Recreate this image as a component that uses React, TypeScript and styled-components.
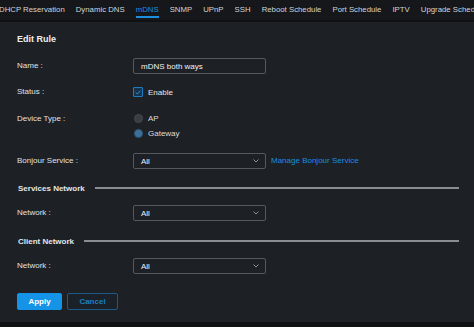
import * as React from 'react';
import styled, { createGlobalStyle } from 'styled-components';

const GlobalStyle = createGlobalStyle`
  html, body {
    margin: 0;
    padding: 0;
    background: #0f1113;
    font-family: "Liberation Sans", Arial, sans-serif;
  }
`;

const Page = styled.div`
  width: 474px;
  height: 327px;
  overflow: hidden;
  background: #0f1113;
  display: flex;
  flex-direction: column;
`;

const TabBar = styled.nav`
  height: 20px;
  background: #15171a;
  display: flex;
  align-items: stretch;
  gap: 11px;
  margin-left: -1px;
  white-space: nowrap;
  overflow: hidden;
  flex-shrink: 0;
`;

const Tab = styled.div<{ $active?: boolean }>`
  position: relative;
  font-size: 7.8px;
  line-height: 19px;
  color: ${p => (p.$active ? '#1b8fe0' : '#d2d5d9')};
  &::after {
    content: '';
    display: ${p => (p.$active ? 'block' : 'none')};
    position: absolute;
    left: 0;
    right: 0;
    bottom: 2px;
    height: 2px;
    background: #1b8fe0;
  }
`;

const Panel = styled.main`
  margin-top: 2px;
  height: 300px;
  background: #1d2024;
  padding: 10px 15px 0 17px;
  box-sizing: border-box;
  display: flex;
  flex-direction: column;
`;

const Title = styled.h2`
  margin: 0;
  font-size: 9px;
  line-height: 14px;
  font-weight: 700;
  color: #eceef0;
`;

const Row = styled.div<{ $space: number }>`
  display: flex;
  align-items: flex-start;
  margin-top: ${p => p.$space}px;
`;

const Label = styled.div`
  width: 116px;
  flex-shrink: 0;
  font-size: 8px;
  line-height: 16px;
  color: #e0e2e5;
`;

const Field = styled.div`
  width: 133px;
  height: 16px;
  box-sizing: border-box;
  border: 1px solid #55595e;
  border-radius: 2px;
  background: #1d2024;
  display: flex;
  align-items: center;
  justify-content: space-between;
  padding: 0 6px 0 7px;
  font-size: 8px;
  color: #f0f2f4;
`;

const Chevron = () => (
  <svg width="6" height="4" viewBox="0 0 6 4">
    <path d="M0.5 0.5 L3 3 L5.5 0.5" stroke="#8c9095" strokeWidth="1" fill="none" />
  </svg>
);

const Check = styled.label`
  display: flex;
  align-items: center;
  gap: 5px;
  height: 16px;
  font-size: 8px;
  color: #e6e8ea;
`;

const Box = styled.span`
  width: 10px;
  height: 10px;
  box-sizing: border-box;
  border: 1px solid #1f7dbd;
  background: #17324a;
  border-radius: 1px;
  display: flex;
  align-items: center;
  justify-content: center;
`;

const RadioGroup = styled.div`
  display: flex;
  flex-direction: column;
`;

const Radio = styled.label`
  display: flex;
  align-items: center;
  gap: 5px;
  height: 15px;
  padding-left: 1px;
  font-size: 8px;
  color: #dadcdf;
`;

const Dot = styled.span<{ $on?: boolean }>`
  width: 9px;
  height: 9px;
  border-radius: 50%;
  box-sizing: border-box;
  background: ${p => (p.$on ? '#3f6f96' : '#3a3d41')};
  border: 1px solid ${p => (p.$on ? '#2c587c' : '#45484c')};
`;

const Link = styled.a`
  margin-left: 5px;
  font-size: 8px;
  line-height: 16px;
  color: #1b8fe0;
  text-decoration: none;
`;

const Section = styled.div<{ $space: number }>`
  display: flex;
  align-items: center;
  gap: 10px;
  height: 16px;
  margin-top: ${p => p.$space}px;
`;

const SectionTitle = styled.div`
  font-size: 8px;
  font-weight: 700;
  color: #e4e6e8;
  white-space: nowrap;
  padding-left: 1px;
`;

const Rule = styled.div`
  flex: 1;
  height: 2px;
  background: #8a8d91;
`;

const Actions = styled.div`
  display: flex;
  gap: 5px;
  margin-top: 19px;
`;

const Button = styled.button<{ $primary?: boolean }>`
  height: 17px;
  box-sizing: border-box;
  padding: 0;
  width: ${p => (p.$primary ? '45px' : '51px')};
  font-family: inherit;
  font-size: 8px;
  font-weight: 700;
  border-radius: 2px;
  border: 1px solid ${p => (p.$primary ? '#1593e6' : '#1d5a86')};
  background: ${p => (p.$primary ? '#1593e6' : '#1a2129')};
  color: ${p => (p.$primary ? '#ffffff' : '#1b7fc4')};
`;

const tabs = [
  'DHCP Reservation',
  'Dynamic DNS',
  'mDNS',
  'SNMP',
  'UPnP',
  'SSH',
  'Reboot Schedule',
  'Port Schedule',
  'IPTV',
  'Upgrade Schedule',
];

export default function App() {
  return (
    <Page>
      <GlobalStyle />
      <TabBar>
        {tabs.map(t => (
          <Tab key={t} $active={t === 'mDNS'}>
            {t}
          </Tab>
        ))}
      </TabBar>
      <Panel>
        <Title>Edit Rule</Title>
        <Row $space={12}>
          <Label>Name :</Label>
          <Field>mDNS both ways</Field>
        </Row>
        <Row $space={10}>
          <Label>Status :</Label>
          <Check>
            <Box>
              <svg width="6" height="5" viewBox="0 0 6 5">
                <path d="M0.6 2.4 L2.3 4 L5.4 0.8" stroke="#2a91d6" strokeWidth="1" fill="none" />
              </svg>
            </Box>
            Enable
          </Check>
        </Row>
        <Row $space={11}>
          <Label>Device Type :</Label>
          <RadioGroup>
            <Radio>
              <Dot />
              AP
            </Radio>
            <Radio>
              <Dot $on />
              Gateway
            </Radio>
          </RadioGroup>
        </Row>
        <Row $space={12}>
          <Label>Bonjour Service :</Label>
          <Field>
            All
            <Chevron />
          </Field>
          <Link>Manage Bonjour Service</Link>
        </Row>
        <Section $space={11}>
          <SectionTitle>Services Network</SectionTitle>
          <Rule />
        </Section>
        <Row $space={9}>
          <Label>Network :</Label>
          <Field>
            All
            <Chevron />
          </Field>
        </Row>
        <Section $space={12}>
          <SectionTitle>Client Network</SectionTitle>
          <Rule />
        </Section>
        <Row $space={9}>
          <Label>Network :</Label>
          <Field>
            All
            <Chevron />
          </Field>
        </Row>
        <Actions>
          <Button $primary>Apply</Button>
          <Button>Cancel</Button>
        </Actions>
      </Panel>
    </Page>
  );
}
